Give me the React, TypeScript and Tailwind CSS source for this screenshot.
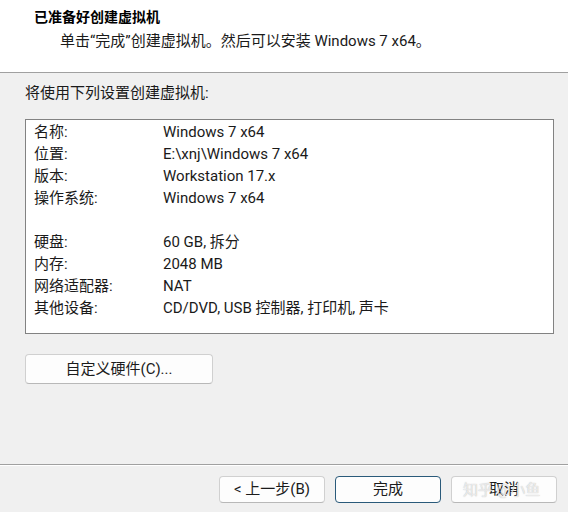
const font = '[font-family:"Segoe_UI",Roboto,"Noto_Sans_CJK_SC",sans-serif]'

const rows: [string, string][] = [
  ['名称:', 'Windows 7 x64'],
  ['位置:', 'E:\\xnj\\Windows 7 x64'],
  ['版本:', 'Workstation 17.x'],
  ['操作系统:', 'Windows 7 x64'],
]

const hwRows: [string, string][] = [
  ['硬盘:', '60 GB, 拆分'],
  ['内存:', '2048 MB'],
  ['网络适配器:', 'NAT'],
  ['其他设备:', 'CD/DVD, USB 控制器, 打印机, 声卡'],
]

function Row({ label, value }: { label: string; value: string }) {
  return (
    <div className="flex h-[22px] items-center">
      <span className="w-[129px] shrink-0">{label}</span>
      <span className="whitespace-nowrap">{value}</span>
    </div>
  )
}

function DlgButton({
  children,
  primary,
  className = '',
}: {
  children: React.ReactNode
  primary?: boolean
  className?: string
}) {
  return (
    <button
      className={`flex items-center justify-center rounded-[4px] bg-[#fdfdfd] text-[15px] text-[#1b1b1b] ${
        primary ? 'border border-[#2a5a7a]' : 'border border-[#d0d0d0] border-b-[#b8b8b8]'
      } ${className}`}
    >
      {children}
    </button>
  )
}

export default function App() {
  return (
    <div className={`w-[568px] h-[512px] overflow-hidden flex flex-col bg-[#f0f0f0] text-[15px] text-[#1a1a1a] ${font}`}>
      {/* Header */}
      <div className="h-[73px] shrink-0 bg-white border-b border-[#a0a0a0] pl-[34px] pt-[6px]">
        <div className="text-[14px] font-bold leading-[22px] text-black">已准备好创建虚拟机</div>
        <div className="pl-[26px] mt-[2px] leading-[22px] whitespace-nowrap">
          单击“完成”创建虚拟机。然后可以安装 Windows 7 x64。
        </div>
      </div>

      {/* Body */}
      <div className="flex-1 flex flex-col px-[25px] border-b border-[#a0a0a0]">
        <div className="mt-[9px] leading-[22px]">将使用下列设置创建虚拟机:</div>
        <div className="mt-[15px] h-[215px] w-[529px] bg-white border border-[#828282] pl-[8px] pt-[1px]">
          {rows.map(([l, v]) => (
            <Row key={l} label={l} value={v} />
          ))}
          <div className="h-[22px]" />
          {hwRows.map(([l, v]) => (
            <Row key={l} label={l} value={v} />
          ))}
        </div>
        <DlgButton className="mt-[20px] h-[30px] w-[188px]">自定义硬件(C)...</DlgButton>
      </div>

      {/* Footer */}
      <div className="h-[47px] shrink-0 border-t border-white flex items-start justify-end gap-[10px] pr-[11px] pt-[10px]">
        <DlgButton className="h-[27px] w-[106px]">&lt; 上一步(B)</DlgButton>
        <DlgButton primary className="h-[27px] w-[106px]">完成</DlgButton>
        <div className="relative">
          <DlgButton className="h-[27px] w-[106px]">取消</DlgButton>
          <span className="absolute left-[12px] top-[3px] text-[15px] text-white/70 [text-shadow:0_0_1px_rgba(120,120,120,0.6)] whitespace-nowrap pointer-events-none">
            知乎 @小鱼
          </span>
        </div>
      </div>
    </div>
  )
}
